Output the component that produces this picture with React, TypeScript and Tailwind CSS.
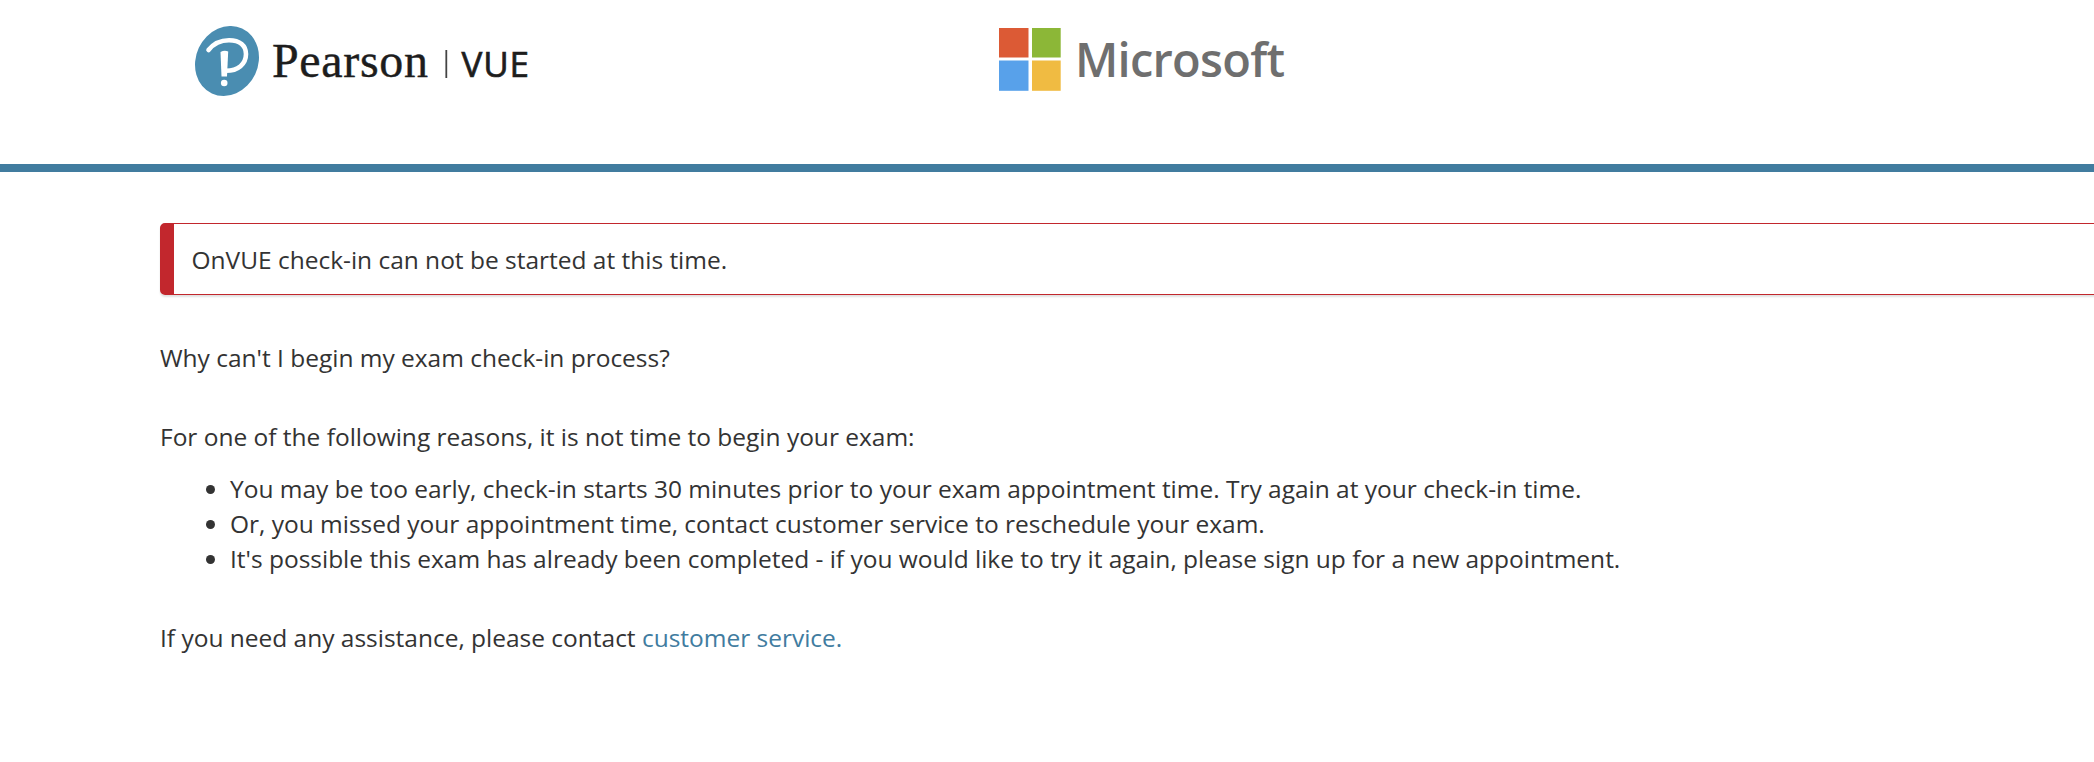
import React from "react";

const reasons = [
  "You may be too early, check-in starts 30 minutes prior to your exam appointment time. Try again at your check-in time.",
  "Or, you missed your appointment time, contact customer service to reschedule your exam.",
  "It's possible this exam has already been completed - if you would like to try it again, please sign up for a new appointment.",
];

function PearsonLogo() {
  return (
    <svg width="350" height="72" viewBox="0 0 350 72" className="shrink-0">
      <ellipse cx="32" cy="35" rx="31.1" ry="35.8" transform="rotate(25 32 35)" fill="#4a8db1" />
      <path
        d="M13.5 24C19 17 26 14.2 34 14.2C45 14.2 51 19.8 51 28C51 38 43 44.8 31 44.8"
        fill="none"
        stroke="#fff"
        strokeWidth="4.6"
        strokeLinecap="round"
      />
      <path d="M25.5 26Q29.5 23.7 33.2 25.5L32 50.5H26.5Z" fill="#fff" />
      <circle cx="29.2" cy="57" r="3.3" fill="#fff" />
      <text
        x="77"
        y="50.5"
        textLength="156"
        lengthAdjust="spacing"
        fill="#1d1d1d"
        stroke="#1d1d1d"
        strokeWidth="0.4"
        className="font-['Liberation_Serif',serif] text-[48px]"
      >
        Pearson
      </text>
      <path d="M251.3 24V52" stroke="#444" strokeWidth="1.8" />
      <text
        x="266.5"
        y="50.5"
        textLength="67.5"
        lengthAdjust="spacing"
        fill="#1d1d1d"
        stroke="#1d1d1d"
        strokeWidth="0.7"
        className="font-['Open_Sans',sans-serif] text-[35px]"
      >
        VUE
      </text>
    </svg>
  );
}

function MicrosoftLogo() {
  return (
    <svg width="310" height="72" viewBox="0 0 310 72" className="shrink-0">
      <rect x="1" y="2" width="29.5" height="29.5" fill="#dc5a35" />
      <rect x="34" y="2" width="28.7" height="29.5" fill="#8cb737" />
      <rect x="1" y="34.5" width="29.5" height="30.3" fill="#58a1ea" />
      <rect x="34" y="34.5" width="28.7" height="30.3" fill="#f0bb42" />
      <text
        x="77"
        y="50.7"
        textLength="210"
        lengthAdjust="spacing"
        fill="#6f6f6f"
        className="font-['Open_Sans',sans-serif] text-[47px] font-semibold"
      >
        Microsoft
      </text>
    </svg>
  );
}

export default function App() {
  return (
    <div className="min-h-screen overflow-hidden bg-white font-['Open_Sans',sans-serif] text-[24.5px] leading-[35px] tracking-[-0.012px] text-[#333]">
      <header className="flex h-[172px] items-start border-b-8 border-[#417c9f] pt-[26px] pl-[195px]">
        <PearsonLogo />
        <div className="ml-[453px]">
          <MicrosoftLogo />
        </div>
      </header>

      <main className="pt-[51px] pl-[160px]">
        {/* runs past the right edge of the viewport */}
        <div className="-mr-4 rounded-[5px] border border-l-[14px] border-[#c2272d] px-[17.5px] pt-[18px] pb-[17px] shadow-[0_2px_2px_rgba(0,0,0,0.12)]">
          OnVUE check-in can not be started at this time.
        </div>

        <p className="mt-[45px]">Why can't I begin my exam check-in process?</p>
        <p className="mt-11">For one of the following reasons, it is not time to begin your exam:</p>

        <ul className="mt-[17px] list-disc pl-[70px]">
          {reasons.map((r) => (
            <li key={r}>{r}</li>
          ))}
        </ul>

        <p className="mt-11">
          If you need any assistance, please contact{" "}
          <a href="#" className="text-[#417c9f]">
            customer service.
          </a>
        </p>
      </main>
    </div>
  );
}
